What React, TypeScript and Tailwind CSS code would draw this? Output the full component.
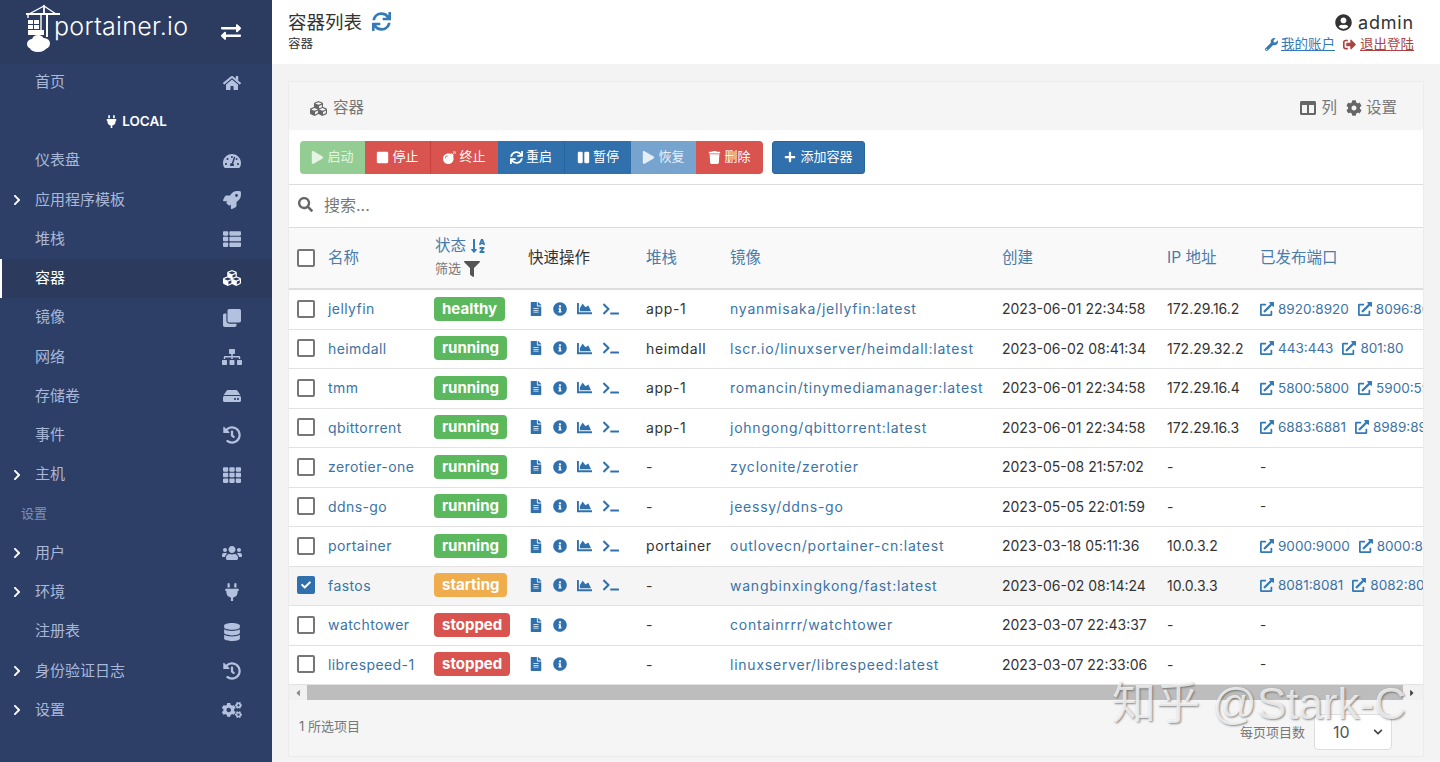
import React from "react";
import {
  FaHome, FaTachometerAlt, FaRocket, FaThList, FaCubes, FaClone, FaSitemap, FaHdd, FaHistory, FaTh, FaUsers, FaPlug,
  FaDatabase, FaCogs, FaExchangeAlt, FaSync, FaUserCircle, FaWrench, FaSignOutAlt, FaColumns, FaCog, FaPlay, FaStop,
  FaBomb, FaPause, FaTrash, FaPlus, FaSearch, FaSortAlphaDown, FaFilter, FaFileAlt, FaInfoCircle, FaChartArea,
  FaTerminal, FaExternalLinkAlt, FaChevronRight, FaChevronDown, FaCheck, FaCaretLeft, FaCaretRight,
} from "react-icons/fa";

const FONT = { fontFamily: '"Inter","Noto Sans CJK SC",sans-serif' };

type NavItem = { label: string; icon?: React.ComponentType<{ className?: string }>; arrow?: boolean; active?: boolean; kind?: "local" | "section"; h?: string; big?: boolean };

const nav: NavItem[] = [
  { label: "首页", icon: FaHome, h: "h-[37px]" },
  { label: "LOCAL", kind: "local" },
  { label: "仪表盘", icon: FaTachometerAlt },
  { label: "应用程序模板", icon: FaRocket, arrow: true },
  { label: "堆栈", icon: FaThList },
  { label: "容器", icon: FaCubes, active: true },
  { label: "镜像", icon: FaClone },
  { label: "网络", icon: FaSitemap, big: true },
  { label: "存储卷", icon: FaHdd },
  { label: "事件", icon: FaHistory },
  { label: "主机", icon: FaTh, arrow: true },
  { label: "设置", kind: "section" },
  { label: "用户", icon: FaUsers, arrow: true, big: true },
  { label: "环境", icon: FaPlug, arrow: true },
  { label: "注册表", icon: FaDatabase },
  { label: "身份验证日志", icon: FaHistory, arrow: true },
  { label: "设置", icon: FaCogs, arrow: true, big: true },
];

function Sidebar() {
  return (
    <aside className="w-[272px] shrink-0 bg-[#2e3f67] flex flex-col">
      <div className="h-[64px] bg-[#2c3b60] flex items-center pl-[26px] pr-[30px] shrink-0">
        <svg width="36" height="50" viewBox="0 0 36 50" className="shrink-0 -mt-[6px] -mr-[8px]">
          <g fill="none" stroke="#fff" strokeWidth="1.4">
            <path d="M0 10 L34 10" strokeWidth="1.8" />
            <path d="M3 10 L18 2 L30 10" />
            <path d="M18 1 L18 9" strokeWidth="1.8" />
            <path d="M21 10 L21 33" strokeWidth="2" />
            <path d="M15 10 L15 28" />
            <path d="M2 10 L2 14" />
          </g>
          <g fill="#fff">
            <rect x="2" y="16" width="5" height="4" />
            <rect x="8" y="16" width="5" height="4" />
            <rect x="2" y="21" width="5" height="4" />
            <rect x="8" y="21" width="5" height="4" />
            <rect x="2" y="26" width="16" height="5" />
            <ellipse cx="6.5" cy="40" rx="5.5" ry="5" />
            <ellipse cx="18" cy="39.5" rx="6" ry="5.5" />
            <ellipse cx="12" cy="36" rx="6" ry="5" />
            <ellipse cx="12" cy="44" rx="8" ry="4" />
          </g>
        </svg>
        <span className="text-white text-[25px] font-light tracking-[0.012em] leading-none -mt-[12px]" style={FONT}>portainer.io</span>
        <FaExchangeAlt className="ml-auto text-white text-[20px] mr-[1px]" />
      </div>
      {nav.map((n, i) => {
        if (n.kind === "local")
          return (
            <div key={i} className="h-[40px] flex items-center justify-center text-white text-[13.5px] font-semibold gap-[4px]" style={FONT}>
              <FaPlug className="text-[13px]" />
              LOCAL
            </div>
          );
        if (n.kind === "section")
          return (
            <div key={i} className="h-[39.25px] flex items-center pl-[21px] text-[#7f90b8] text-[13px]" style={FONT}>
              {n.label}
            </div>
          );
        const Icon = n.icon!;
        return (
          <div
            key={i}
            className={`${n.h ?? "h-[39.25px]"} flex items-center pr-[31px] text-[15px] relative ${n.active ? "bg-[#2b3a5d] text-white border-l-[2px] border-white pl-[33px]" : "text-[#a9b8d8] pl-[35px]"}`}
            style={FONT}
          >
            {n.arrow && <FaChevronRight className="absolute left-[11px] text-white text-[12px]" />}
            <span>{n.label}</span>
            <Icon className={`ml-auto ${n.big ? "text-[20px] -mr-[1px]" : "text-[18px]"} ${n.active ? "text-white" : "text-[#b3c1de]"}`} />
          </div>
        );
      })}
    </aside>
  );
}

function Header() {
  return (
    <header className="h-[64px] bg-white flex justify-between pl-4 pr-[26px] shrink-0" style={FONT}>
      <div>
        <div className="flex items-center gap-[10px] mt-[10px] text-[18.5px] leading-[25px] text-[#333]">
          容器列表
          <FaSync className="text-[#337ab7] text-[19px] -mt-[2px]" />
        </div>
        <div className="text-[12.5px] leading-[16px] mt-[1px] text-[#333]">容器</div>
      </div>
      <div className="flex flex-col items-end">
        <div className="flex items-center gap-[6px] mt-[10px] text-[18px] leading-[25px] text-[#333] tracking-[0.045em]">
          <FaUserCircle className="text-[17px]" />
          admin
        </div>
        <div className="flex items-center text-[13.5px] leading-[16px] mt-[1px]">
          <FaWrench className="text-[#337ab7] text-[13px]" />
          <span className="text-[#337ab7] underline pl-[3px] pr-[1px]">我的账户</span>
          <FaSignOutAlt className="text-[#a94442] text-[13px] ml-[7px]" />
          <span className="text-[#a94442] underline pl-[4px]">退出登陆</span>
        </div>
      </div>
    </header>
  );
}

type Btn = { label: string; icon: React.ComponentType<{ className?: string }>; cls: string; w: string };
const btns: Btn[] = [
  { label: "启动", icon: FaPlay, cls: "bg-[#93cd93] text-[#e6f4e6] rounded-l-[4px]", w: "w-[65px]" },
  { label: "停止", icon: FaStop, cls: "bg-[#d9534f] text-white border-r border-[#c9403c]", w: "w-[66px]" },
  { label: "终止", icon: FaBomb, cls: "bg-[#d9534f] text-white", w: "w-[67px]" },
  { label: "重启", icon: FaSync, cls: "bg-[#2f70ad] text-white border-r border-[#28649c]", w: "w-[67px]" },
  { label: "暂停", icon: FaPause, cls: "bg-[#2f70ad] text-white", w: "w-[66px]" },
  { label: "恢复", icon: FaPlay, cls: "bg-[#77a3cf] text-[#e6eff8]", w: "w-[65px]" },
  { label: "删除", icon: FaTrash, cls: "bg-[#d9534f] text-white rounded-r-[4px]", w: "w-[67px]" },
];

type Row = { name: string; status: string; stack: string; image: string; created: string; ip: string; ports: string[]; selected?: boolean };
const rows: Row[] = [
  { name: "jellyfin", status: "healthy", stack: "app-1", image: "nyanmisaka/jellyfin:latest", created: "2023-06-01 22:34:58", ip: "172.29.16.2", ports: ["8920:8920", "8096:8096"] },
  { name: "heimdall", status: "running", stack: "heimdall", image: "lscr.io/linuxserver/heimdall:latest", created: "2023-06-02 08:41:34", ip: "172.29.32.2", ports: ["443:443", "801:80"] },
  { name: "tmm", status: "running", stack: "app-1", image: "romancin/tinymediamanager:latest", created: "2023-06-01 22:34:58", ip: "172.29.16.4", ports: ["5800:5800", "5900:5900"] },
  { name: "qbittorrent", status: "running", stack: "app-1", image: "johngong/qbittorrent:latest", created: "2023-06-01 22:34:58", ip: "172.29.16.3", ports: ["6883:6881", "8989:8989"] },
  { name: "zerotier-one", status: "running", stack: "-", image: "zyclonite/zerotier", created: "2023-05-08 21:57:02", ip: "-", ports: [] },
  { name: "ddns-go", status: "running", stack: "-", image: "jeessy/ddns-go", created: "2023-05-05 22:01:59", ip: "-", ports: [] },
  { name: "portainer", status: "running", stack: "portainer", image: "outlovecn/portainer-cn:latest", created: "2023-03-18 05:11:36", ip: "10.0.3.2", ports: ["9000:9000", "8000:8000"] },
  { name: "fastos", status: "starting", stack: "-", image: "wangbinxingkong/fast:latest", created: "2023-06-02 08:14:24", ip: "10.0.3.3", ports: ["8081:8081", "8082:8082"], selected: true },
  { name: "watchtower", status: "stopped", stack: "-", image: "containrrr/watchtower", created: "2023-03-07 22:43:37", ip: "-", ports: [] },
  { name: "librespeed-1", status: "stopped", stack: "-", image: "linuxserver/librespeed:latest", created: "2023-03-07 22:33:06", ip: "-", ports: [] },
];

const badgeCls: Record<string, string> = {
  healthy: "bg-[#5cb85c]",
  running: "bg-[#5cb85c]",
  starting: "bg-[#f0ad4e]",
  stopped: "bg-[#d9534f]",
};

const COLS = "grid grid-cols-[145px_94px_118px_84px_272px_165px_93px_400px] w-[1371px]";

function Check({ on }: { on?: boolean }) {
  return on ? (
    <span className="w-[18px] h-[18px] rounded-[2px] bg-[#2f70ad] flex items-center justify-center shrink-0">
      <FaCheck className="text-white text-[10px]" />
    </span>
  ) : (
    <span className="w-[18px] h-[18px] rounded-[2px] border-2 border-[#767676] bg-white shrink-0" />
  );
}

function Table() {
  return (
    <div className="overflow-hidden shrink-0">
      <div className={`${COLS} h-[62px] bg-[#f9f9f9] border-b-2 border-[#ddd] text-[15.5px] text-[#4a7bab] items-center`}>
        <div className="flex items-center pl-[8px] gap-[13px]">
          <Check />
          <span>名称</span>
        </div>
        <div className="pl-[1px]">
          <div className="flex items-center gap-[4px] leading-[22px] -mt-[1px]">
            状态 <FaSortAlphaDown className="text-[16px] text-[#337ab7]" />
          </div>
          <div className="flex items-center gap-[3px] text-[13px] leading-[23px] text-[#777]">
            筛选 <FaFilter className="text-[16px] text-[#555]" />
          </div>
        </div>
        <div className="text-[#333]">快速操作</div>
        <div>堆栈</div>
        <div>镜像</div>
        <div>创建</div>
        <div>IP 地址</div>
        <div>已发布端口</div>
      </div>
      {rows.map((r) => (
        <div key={r.name} className={`${COLS} h-[39.5px] pb-[1px] border-b border-[#e2e2e2] items-center text-[14px] ${r.selected ? "bg-[#f5f5f5]" : "bg-white"}`}>
          <div className="flex items-center pl-[8px] gap-[13px]">
            <Check on={r.selected} />
            <span className="text-[#3b73a6] tracking-[0.03em]">{r.name}</span>
          </div>
          <div>
            <span className={`inline-flex items-center h-[24px] px-[8px] rounded-[4px] text-white text-[15px] font-bold ${badgeCls[r.status]}`}>{r.status}</span>
          </div>
          <div className="flex items-center text-[#2f70ad] pl-[2px]">
            <FaFileAlt className="text-[14px] w-[12px] mr-[11px]" />
            <FaInfoCircle className="text-[14px] mr-[10px]" />
            {r.status !== "stopped" && (
              <>
                <FaChartArea className="text-[15px] mr-[11px]" />
                <FaTerminal className="text-[16px]" />
              </>
            )}
          </div>
          <div className="text-[#333] tracking-[0.045em]">{r.stack}</div>
          <div className="text-[#3b73a6] whitespace-nowrap tracking-[0.055em]">{r.image}</div>
          <div className="text-[#333] whitespace-nowrap">{r.created}</div>
          <div className="text-[#333]">{r.ip}</div>
          <div className="flex items-center gap-[9px] text-[#3b73a6] whitespace-nowrap text-[13.5px]">
            {r.ports.length === 0 && <span className="text-[#333]">-</span>}
            {r.ports.map((p) => (
              <span key={p} className="flex items-center gap-[4px]">
                <FaExternalLinkAlt className="text-[14px] text-[#337ab7]" />
                {p}
              </span>
            ))}
          </div>
        </div>
      ))}
    </div>
  );
}

export default function App() {
  return (
    <div className="h-[762px] w-[1440px] overflow-hidden flex relative bg-[#f3f3f3]" style={FONT}>
      <Sidebar />
      <main className="flex-1 min-w-0 flex flex-col">
        <Header />
        <section className="mx-4 mt-[17px] h-[676px] border border-[#ececec] bg-[#f5f5f5] flex flex-col overflow-hidden">
          <div className="h-[48px] shrink-0 flex items-center pl-[21px] pr-[26px] pt-[4px] text-[15.5px] text-[#777]">
            <FaCubes className="text-[17px] text-[#666] mr-[6px]" />
            容器
            <FaColumns className="ml-auto text-[16px] text-[#666] mr-[5px]" />
            列
            <FaCog className="text-[16px] text-[#666] ml-[9px] mr-[4px]" />
            设置
          </div>
          <div className="h-[55px] shrink-0 bg-white border-b border-[#ddd] flex items-center pl-[11px]">
            <div className="flex h-[33px]">
              {btns.map((b) => {
                const I = b.icon;
                return (
                  <div key={b.label} className={`${b.w} ${b.cls} flex items-center justify-center gap-[3px] text-[13px]`}>
                    <I className="text-[13px]" />
                    {b.label}
                  </div>
                );
              })}
            </div>
            <div className="ml-[9px] h-[33px] w-[93px] bg-[#2f70ad] border border-[#28649c] rounded-[3px] text-white text-[13px] flex items-center justify-center gap-[4px]">
              <FaPlus className="text-[12px]" />
              添加容器
            </div>
          </div>
          <div className="h-[43px] shrink-0 bg-white border-b border-[#ddd] flex items-center pl-[9px] pb-[3px] gap-[11px] text-[16px] text-[#777]">
            <FaSearch className="text-[15px] text-[#666]" />
            搜索...
          </div>
          <Table />
          <div className="h-[15px] shrink-0 bg-[#f1f1f1] flex items-center">
            <FaCaretLeft className="w-[18px] text-[10px] text-[#888] shrink-0" />
            <div className="h-[15px] w-[1096px] bg-[#bdbdbd]" />
            <FaCaretRight className="ml-auto mr-[4px] w-[14px] text-[10px] text-[#444] shrink-0" />
          </div>
          <div className="flex-1 flex items-start pl-[10px] pr-[31px] text-[#777]">
            <span className="text-[13px] mt-[17px]">1 所选项目</span>
            <span className="ml-auto text-[13px] mt-[23px]">每页项目数</span>
            <div className="ml-[9px] mt-[14px] w-[78px] h-[36px] bg-white border border-[#ddd] rounded-[4px] flex items-center pl-[18px] pr-[8px] text-[16px] text-[#555]">
              10
              <FaChevronDown className="ml-auto text-[10px] text-[#444]" />
            </div>
          </div>
        </section>
      </main>
      <div className="absolute left-[1112px] top-[676px] text-[44px] leading-[56px] font-normal text-white/75 whitespace-nowrap [text-shadow:1px_1px_2px_rgba(80,80,80,0.65)]" style={{ fontFamily: '"Liberation Sans","Noto Sans CJK SC",sans-serif' }}>
        知乎 @Stark-C
      </div>
    </div>
  );
}
